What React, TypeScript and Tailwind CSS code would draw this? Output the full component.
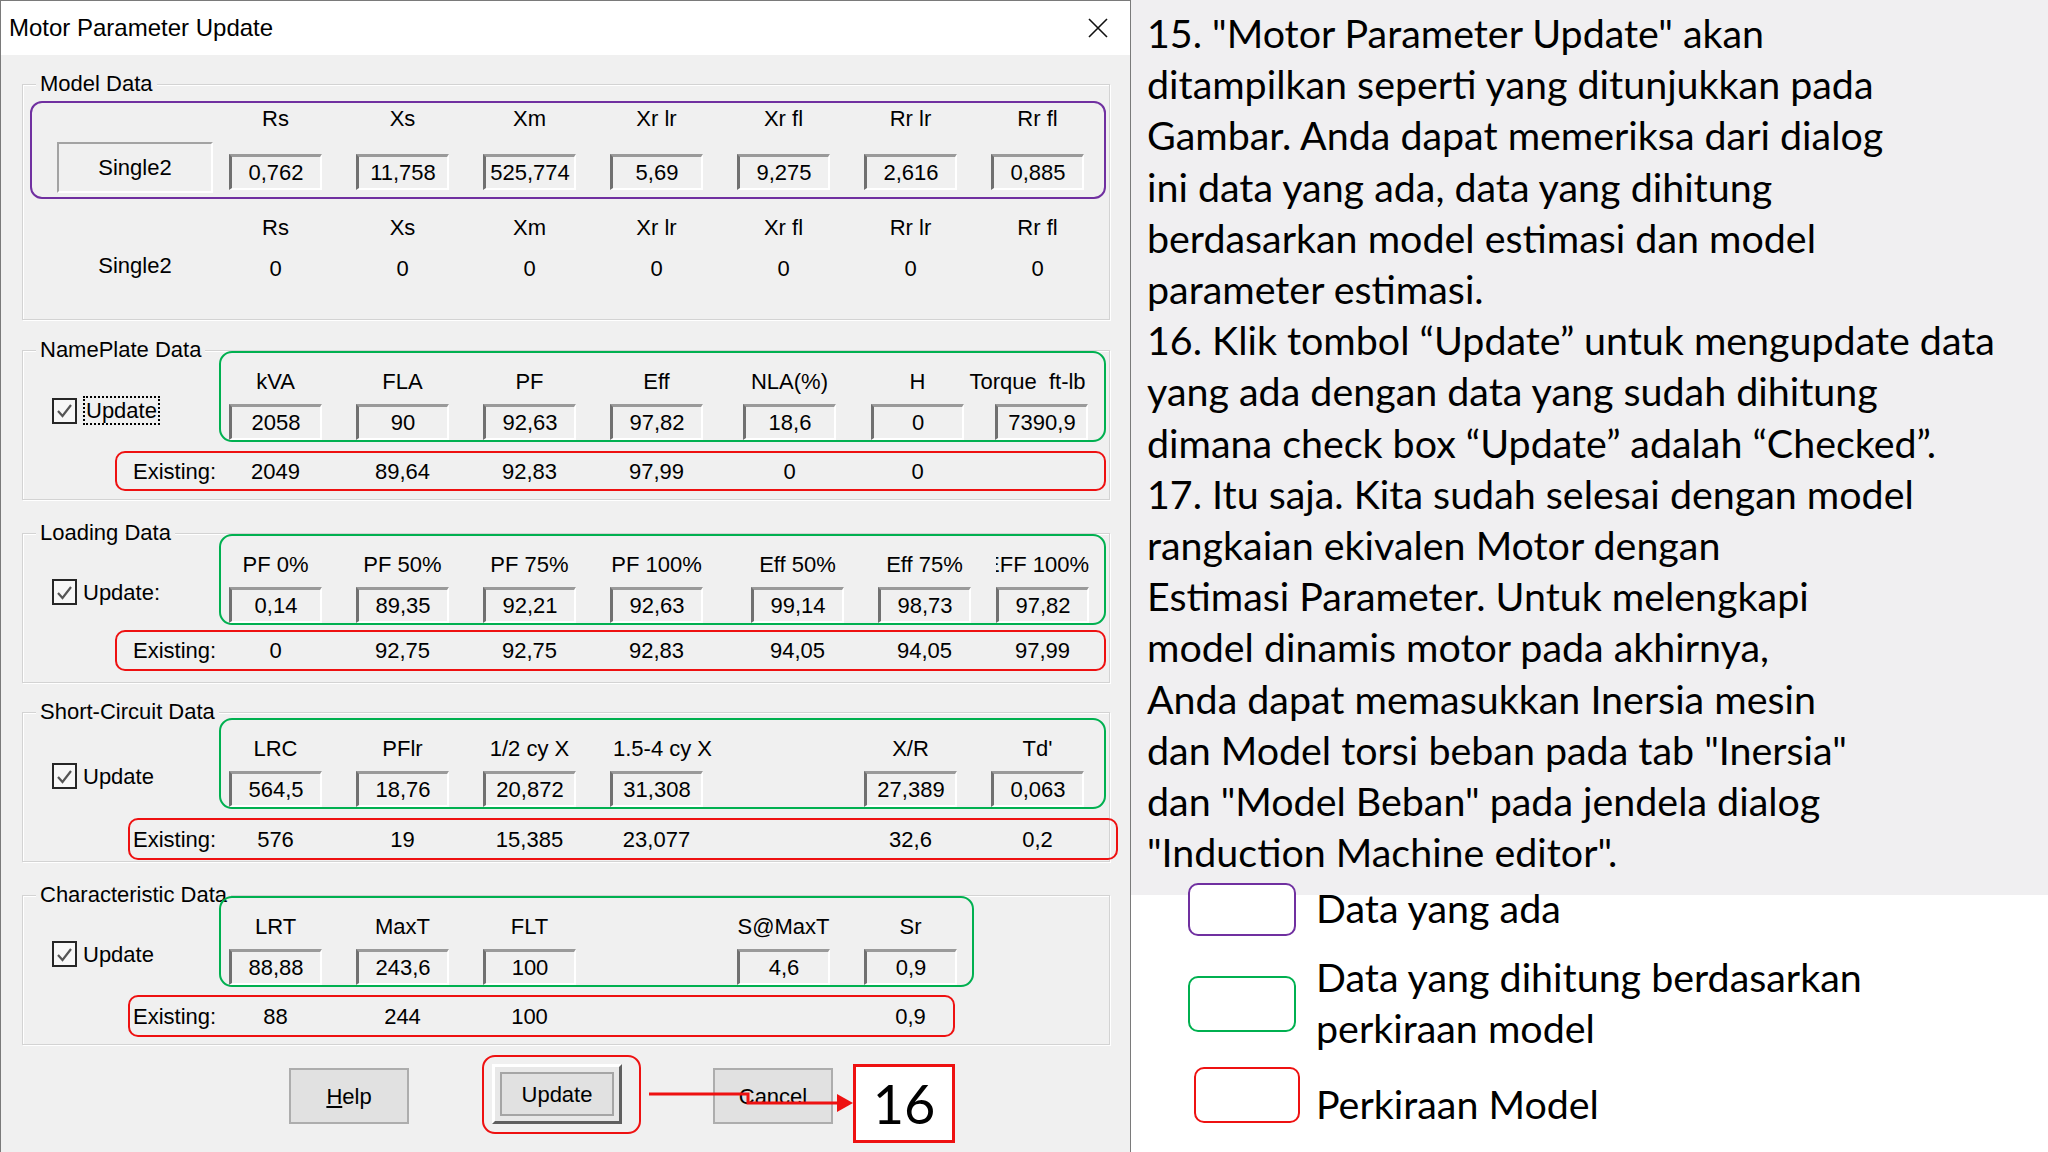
import React from 'react';

type Cell = { t: string; cls?: string } | null;

const UNIFORM = 'grid-cols-[repeat(7,93px)]';
const NAMEPLATE = 'grid-cols-[93px_93px_93px_99px_94px_90px_93px]';
const LOADING = 'grid-cols-[93px_93px_93px_107px_93px_84px_93px]';

const c = (t: string, cls?: string): Cell => ({ t, cls });

function Field({ value }: { value: string }) {
  return (
    <div className="flex h-[36px] w-[93px] items-center justify-center border-t-[3px] border-l-[3px] border-r-2 border-b-2 border-t-[#9a9a9a] border-l-[#707070] border-r-white border-b-white bg-[#f0f0f0]">
      {value}
    </div>
  );
}

function Label({ cell }: { cell: Cell }) {
  if (!cell) return <div />;
  return (
    <div className={`flex h-[26px] w-[93px] items-center justify-center whitespace-pre ${cell.cls ?? ''}`}>
      {cell.t}
    </div>
  );
}

function CheckBox({ label, focus }: { label: string; focus?: boolean }) {
  return (
    <div className="flex items-center gap-[6px]">
      <div className="flex h-[26px] w-[25px] items-center justify-center border-2 border-[#262626] bg-[#f7f7f7]">
        <svg width="19" height="19" viewBox="0 0 19 19">
          <polyline points="3,10 7.5,15 16,4" fill="none" stroke="#555" strokeWidth="2.2" />
        </svg>
      </div>
      <span className={focus ? 'border-2 border-dotted border-black px-[1px] leading-[25px]' : 'leading-[25px]'}>{label}</span>
    </div>
  );
}

function Group({ label, className, children }: { label: string; className: string; children: React.ReactNode }) {
  return (
    <div className={`relative ml-[21px] w-[1088px] border border-[#d3d3d3] shadow-[inset_1px_1px_0_#ffffff,1px_1px_0_#ffffff] ${className}`}>
      <span className="absolute left-[13px] top-[-14px] bg-[#f0f0f0] px-[4px] leading-[26px]">{label}</span>
      {children}
    </div>
  );
}

function DataSection({
  label,
  className,
  check,
  focus,
  cols,
  heads,
  values,
  existing,
  greenCls,
  redCls,
  existCols,
}: {
  label: string;
  className: string;
  check: string;
  focus?: boolean;
  cols: string;
  heads: Cell[];
  values: (string | null)[];
  existing: (string | null)[];
  greenCls: string;
  redCls: string;
  existCols: string;
}) {
  const [rowCls, boxCls] = greenCls.split('|');
  return (
    <Group label={label} className={`h-[150px] ${className}`}>
      <div className={`relative flex ${rowCls}`}>
        <div className="w-[196px] shrink-0 pl-[29px] pt-[45px]">
          <CheckBox label={check} focus={focus} />
        </div>
        <div className={`shrink-0 rounded-[13px] border-2 border-[#00b050] pl-[8px] pt-[15px] ${boxCls}`}>
          <div className={`grid ${cols} gap-x-[34px] gap-y-[10px]`}>
            {heads.map((h, i) => (
              <Label key={'h' + i} cell={h} />
            ))}
            {values.map((v, i) => (v ? <Field key={'v' + i} value={v} /> : <div key={'v' + i} />))}
          </div>
        </div>
      </div>
      <div className={`relative flex items-center rounded-[10px] border-2 border-[#ee1111] ${redCls}`}>
        <div className="w-[96px] shrink-0">Existing:</div>
        <div className={`grid shrink-0 ${existCols} gap-x-[34px]`}>
          {existing.map((v, i) => (
            <div key={i} className="w-[93px] text-center">
              {v ?? ''}
            </div>
          ))}
        </div>
      </div>
    </Group>
  );
}

function Button({ children }: { children: React.ReactNode }) {
  return (
    <div className="flex h-[56px] w-[120px] items-center justify-center border-2 border-[#adadad] bg-[#e1e1e1]">
      {children}
    </div>
  );
}

const modelHeads = ['Rs', 'Xs', 'Xm', 'Xr lr', 'Xr fl', 'Rr lr', 'Rr fl'];
const modelVals = ['0,762', '11,758', '525,774', '5,69', '9,275', '2,616', '0,885'];

const textLines = [
  '15. "Motor Parameter Update" akan',
  'ditampilkan seperti yang ditunjukkan pada',
  'Gambar. Anda dapat memeriksa dari dialog',
  'ini data yang ada, data yang dihitung',
  'berdasarkan model estimasi dan model',
  'parameter estimasi.',
  '16. Klik tombol “Update” untuk mengupdate data',
  'yang ada dengan data yang sudah dihitung',
  'dimana check box “Update” adalah “Checked”.',
  '17. Itu saja. Kita sudah selesai dengan model',
  'rangkaian ekivalen Motor dengan',
  'Estimasi Parameter. Untuk melengkapi',
  'model dinamis motor pada akhirnya,',
  'Anda dapat memasukkan Inersia mesin',
  'dan Model torsi beban pada tab "Inersia"',
  'dan "Model Beban" pada jendela dialog',
  '"Induction Machine editor".',
];

export default function App() {
  return (
    <div className="flex h-[1152px] w-[2048px] overflow-hidden bg-white">
      {/* dialog */}
      <div className="flex h-full w-[1131px] shrink-0 flex-col border-x border-t border-[#7a7a7a] bg-[#f0f0f0] font-['Liberation_Sans',Arial,sans-serif] text-[22px] text-black">
        <div className="flex h-[54px] shrink-0 items-center justify-between bg-white pl-[8px] pr-[21px]">
          <span className="text-[24px]">Motor Parameter Update</span>
          <svg width="22" height="22" viewBox="0 0 22 22">
            <path d="M2 2 L20 20 M20 2 L2 20" stroke="#111" strokeWidth="1.6" />
          </svg>
        </div>

        {/* Model Data */}
        <Group label="Model Data" className="mt-[29px] h-[236px]">
          <div className="relative ml-[7px] mt-[16px] flex h-[98px] w-[1076px] rounded-[12px] border-2 border-[#7030a0]">
            <div className="ml-[25px] mr-[16px] mt-[39px] flex h-[51px] w-[156px] shrink-0 items-center justify-center border-2 border-t-[#a3a3a3] border-l-[#a3a3a3] border-b-white border-r-white">
              Single2
            </div>
            <div className="grid grid-cols-[repeat(7,93px)] gap-x-[34px] gap-y-[15px] pt-[2px]">
              {modelHeads.map((h) => (
                <Label key={'mh' + h} cell={c(h)} />
              ))}
              {modelVals.map((v) => (
                <Field key={'mv' + v} value={v} />
              ))}
            </div>
          </div>
          <div className="mt-[15px] flex">
            <div className="ml-[34px] mr-[16px] flex w-[156px] shrink-0 flex-col">
              <div className="h-[41px]" />
              <div className="h-[22px] text-center leading-[22px]">Single2</div>
            </div>
            <div className="grid grid-cols-[repeat(7,93px)] gap-x-[34px] gap-y-[15px]">
              {modelHeads.map((h) => (
                <Label key={'mh2' + h} cell={c(h)} />
              ))}
              {modelHeads.map((h) => (
                <Label key={'mz' + h} cell={c('0')} />
              ))}
            </div>
          </div>
        </Group>

        <DataSection
          label="NamePlate Data"
          className="mt-[30px]"
          check="Update"
          focus
          cols={NAMEPLATE}
          heads={[c('kVA'), c('FLA'), c('PF'), c('Eff'), c('NLA(%)'), c('H'), c('Torque  ft-lb', '-ml-[14px]')]}
          values={['2058', '90', '92,63', '97,82', '18,6', '0', '7390,9']}
          existing={['2049', '89,64', '92,83', '97,99', '0', '0', null]}
          existCols={NAMEPLATE}
          greenCls="-mt-[2px]|h-[96px] w-[887px]"
          redCls="ml-[92px] mt-[9px] h-[40px] w-[991px] pl-[16px]"
        />

        <DataSection
          label="Loading Data"
          className="mt-[33px]"
          check="Update:"
          cols={LOADING}
          heads={[c('PF 0%'), c('PF 50%'), c('PF 75%'), c('PF 100%'), c('Eff 50%'), c('Eff 75%'), c('EFF 100%', 'justify-end overflow-hidden mr-[-3px]')]}
          values={['0,14', '89,35', '92,21', '92,63', '99,14', '98,73', '97,82']}
          existing={['0', '92,75', '92,75', '92,83', '94,05', '94,05', '97,99']}
          existCols={LOADING}
          greenCls="-mt-[5px]|h-[95px] w-[887px]"
          redCls="ml-[92px] mt-[5px] h-[41px] w-[991px] pl-[16px]"
        />

        <DataSection
          label="Short-Circuit Data"
          className="mt-[29px]"
          check="Update"
          cols={UNIFORM}
          heads={[c('LRC'), c('PFlr'), c('1/2 cy X'), c('1.5-4 cy X', 'ml-[6px]'), null, c('X/R'), c('Td\'')]}
          values={['564,5', '18,76', '20,872', '31,308', null, '27,389', '0,063']}
          existing={['576', '19', '15,385', '23,077', null, '32,6', '0,2']}
          existCols={UNIFORM}
          greenCls="mt-[5px]|h-[96px] w-[887px]"
          redCls="ml-[105px] mt-[9px] h-[42px] w-[990px] pl-[3px]"
        />

        <DataSection
          label="Characteristic Data"
          className="mt-[33px]"
          check="Update"
          cols={UNIFORM}
          heads={[c('LRT'), c('MaxT'), c('FLT'), null, c('S@MaxT'), c('Sr'), null]}
          values={['88,88', '243,6', '100', null, '4,6', '0,9', null]}
          existing={['88', '244', '100', null, null, '0,9', null]}
          existCols={UNIFORM}
          greenCls="-mt-[3px]|h-[95px] w-[755px]"
          redCls="ml-[105px] mt-[8px] h-[42px] w-[827px] pl-[3px]"
        />

        {/* buttons */}
        <div className="relative mt-[10px] flex items-start">
          <div className="ml-[288px] mt-[13px]">
            <Button>
              <span>
                <span className="underline">H</span>elp
              </span>
            </Button>
          </div>
          <div className="ml-[73px] h-[79px] w-[159px] rounded-[13px] border-2 border-[#ee1111] pl-[8px] pt-[7px]">
            <div className="h-[60px] w-[130px] border-[3px] border-t-white border-l-white border-r-[#5f5f5f] border-b-[#5f5f5f] bg-[#e8e8e8] p-[5px]">
              <div className="flex h-full w-full items-center justify-center border-2 border-[#a5a5a5] bg-[#e1e1e1]">Update</div>
            </div>
          </div>
          <div className="ml-[72px] mt-[13px]">
            <Button>Cancel</Button>
          </div>
          <div className="ml-[20px] mt-[9px] flex h-[79px] w-[102px] items-center justify-center border-[3px] border-[#ee1111] bg-white font-['Lato',sans-serif] text-[54px]">
            16
          </div>
          <svg className="pointer-events-none absolute left-0 top-0" width="1129" height="90" viewBox="0 0 1129 90">
            <path d="M648 39 H747 V48 H840" fill="none" stroke="#ee1111" strokeWidth="3" />
            <polygon points="836,39 852,48 836,57" fill="#ee1111" />
          </svg>
        </div>
      </div>

      {/* explanation */}
      <div className="flex flex-1 flex-col bg-white font-['Lato',sans-serif] text-[39.4px] leading-[51.2px] text-black">
        <div className="h-[895px] shrink-0 bg-[#f0eff1] pl-[16px] pt-[7px]">
          {textLines.map((l, i) => (
            <div key={i} className="whitespace-nowrap">
              {l}
            </div>
          ))}
        </div>
        <div className="relative -mt-[12px] flex items-start">
          <div className="ml-[57px] h-[53px] w-[108px] rounded-[10px] border-2 border-[#7030a0] bg-white" />
          <div className="ml-[20px] -mt-[1px]">Data yang ada</div>
        </div>
        <div className="mt-[15px] flex items-start">
          <div className="ml-[57px] mt-[25px] h-[56px] w-[108px] rounded-[10px] border-2 border-[#00b050]" />
          <div className="ml-[20px]">
            <div>Data yang dihitung berdasarkan</div>
            <div>perkiraan model</div>
          </div>
        </div>
        <div className="mt-[14px] flex items-start">
          <div className="ml-[63px] h-[56px] w-[106px] rounded-[10px] border-2 border-[#ee1111]" />
          <div className="ml-[16px] mt-[11px]">Perkiraan Model</div>
        </div>
      </div>
    </div>
  );
}
